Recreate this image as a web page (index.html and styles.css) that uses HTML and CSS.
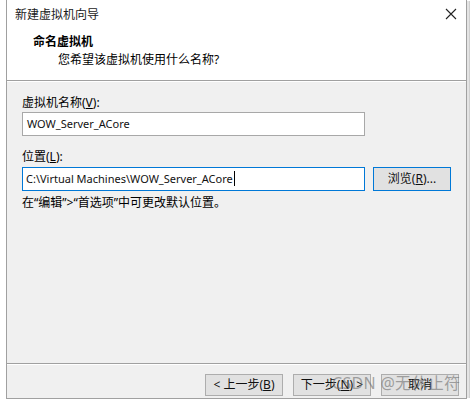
FILE: index.html
```html
<!DOCTYPE html>
<html lang="zh-CN">
<head>
<meta charset="utf-8">
<title>新建虚拟机向导</title>
<link rel="stylesheet" href="styles.css">
</head>
<body>
<div class="dialog">
  <div class="header">
    <div class="titlebar">
      <span class="title">新建虚拟机向导</span>
      <svg class="close" width="12" height="12" viewBox="0 0 12 12"><path d="M1 1 L11 11 M11 1 L1 11" stroke="#222" stroke-width="1.1" fill="none"/></svg>
    </div>
    <div class="head-title">命名虚拟机</div>
    <div class="head-sub">您希望该虚拟机使用什么名称?</div>
  </div>
  <div class="body">
    <div class="label">虚拟机名称(<u>V</u>):</div>
    <div class="field">WOW_Server_ACore</div>
    <div class="label label-2">位置(<u>L</u>):</div>
    <div class="row">
      <div class="field field-focus">C:\Virtual Machines\WOW_Server_ACore<span class="caret"></span></div>
      <div class="btn btn-default">浏览(<u>R</u>)...</div>
    </div>
    <div class="note">在“编辑”&gt;“首选项”中可更改默认位置。</div>
  </div>
  <div class="footer">
    <div class="btn">&lt; 上一步(<u>B</u>)</div>
    <div class="btn">下一步(<u>N</u>) &gt;</div>
    <div class="btn">取消</div>
  </div>
  <div class="watermark">CSDN @无休止符</div>
</div>
</body>
</html>
```

FILE: styles.css
```css
html, body {
  margin: 0;
  padding: 0;
  background: #ffffff;
}
body {
  font-family: "Noto Sans", "Noto Sans CJK SC", sans-serif;
  font-size: 12px;
  color: #000;
}
.dialog {
  position: relative;
  margin-left: 6px;
  width: 459px;
  height: 398px;
  border: 1px solid #a0a0a0;
  border-top: none;
  box-shadow: 3px 0 0 -1px #e4e4e4, 4px 0 0 -1px #d0d0d0;
  display: flex;
  flex-direction: column;
  background: #f0f0f0;
}
.header {
  background: #fff;
  border-bottom: 1px solid #a0a0a0;
  box-sizing: border-box;
  height: 81px;
}
.titlebar {
  height: 30px;
  display: flex;
  align-items: center;
  justify-content: space-between;
  padding: 0 9px 0 8px;
}
.title {
  line-height: 16px;
  color: #1a1a1a;
}
.close {
  display: block;
  margin-top: -2px;
}
.head-title {
  margin-top: 3px;
  padding-left: 26px;
  line-height: 18px;
  font-weight: bold;
}
.head-sub {
  padding-left: 51px;
  line-height: 18px;
}
.body {
  border-top: 1px solid #fff;
  flex: 1;
  padding: 13px 0 0 15px;
}
.label {
  line-height: 16px;
}
.label-2 {
  margin-top: 13px;
}
.field {
  margin-top: 1px;
  height: 22px;
  border: 1px solid #a8a8a8;
  background: #fff;
  line-height: 22px;
  padding-left: 4px;
  box-sizing: content-box;
  width: 337px;
  color: #111;
  white-space: nowrap;
  font-size: 11px;
}
.row {
  display: flex;
  align-items: flex-start;
  gap: 8px;
  margin-top: 2px;
}
.row .field {
  margin-top: 0;
}
.field-focus {
  border-color: #0078d7;
  padding-left: 3px;
  width: 338px;
}
.caret {
  display: inline-block;
  width: 1px;
  height: 15px;
  background: #000;
  vertical-align: -3px;
  margin-left: 1px;
}
.note {
  margin-top: 4px;
  line-height: 16px;
}
.footer {
  height: 35px;
  border-top: 1px solid #a0a0a0;
  box-shadow: inset 0 1px 0 #fff;
  display: flex;
  justify-content: flex-end;
  align-items: flex-start;
  gap: 10px;
  padding: 10px 7px 0 0;
  box-sizing: border-box;
}
.btn {
  width: 76px;
  height: 20px;
  border: 1px solid #adadad;
  background: #e1e1e1;
  line-height: 20px;
  text-align: center;
  color: #111;
  white-space: nowrap;
}
.btn-default {
  border-color: #0078d7;
  height: 22px;
  line-height: 22px;
}
.watermark {
  position: absolute;
  z-index: 2;
  left: 325px;
  top: 373px;
  font-size: 16px;
  line-height: 20px;
  color: rgba(110, 110, 110, 0.6);
  letter-spacing: 0.3px;
  pointer-events: none;
}
```
